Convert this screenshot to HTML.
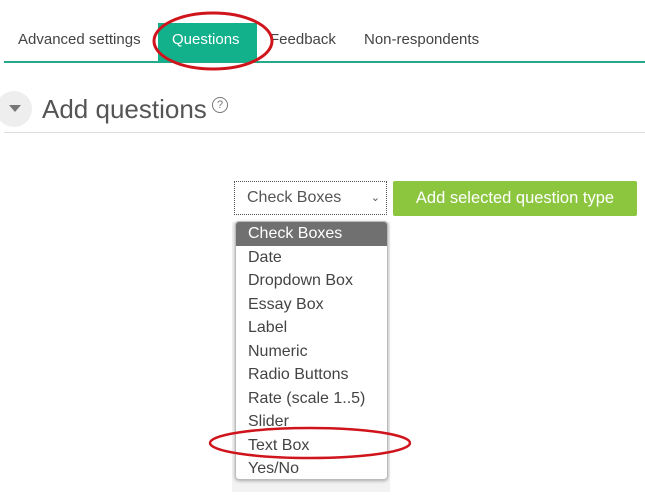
<!DOCTYPE html>
<html><head><style>
body{margin:0;width:645px;height:501px;background:#fff;font-family:"Liberation Sans",sans-serif;position:relative;overflow:hidden;color:#333}
.a{position:absolute}
.tab{position:absolute;top:31px;font-size:15px;color:#444}
.it{height:23.5px;line-height:23.5px;padding-left:12px;font-size:16px;color:#444}
</style></head><body>
<div class="a" style="left:4px;top:61px;width:641px;height:2px;background:#26a98b"></div>
<div class="a" style="left:158px;top:23px;width:99px;height:39px;background:#13b08c"></div>
<div class="tab" style="left:18px">Advanced settings</div>
<div class="tab" style="left:172px;color:#fff">Questions</div>
<div class="tab" style="left:270px">Feedback</div>
<div class="tab" style="left:364px">Non-respondents</div>
<div class="a" style="left:-4px;top:91px;width:36px;height:36px;border-radius:50%;background:#eee"></div>
<div class="a" style="left:9px;top:105px;width:0;height:0;border-left:6px solid transparent;border-right:6px solid transparent;border-top:7px solid #777"></div>
<div class="a" style="left:42px;top:94px;font-size:26px;color:#555">Add questions</div>
<div class="a" style="left:212px;top:97px;width:14px;height:14px;border:1.5px solid #777;border-radius:50%;font-size:11px;line-height:14px;text-align:center;color:#777">?</div>
<div class="a" style="left:4px;top:132px;width:641px;height:1px;background:#ddd"></div>
<div class="a" style="left:234px;top:181px;width:151px;height:32px;border:1px dotted #555;font-size:16px;line-height:32px;color:#555"><span style="padding-left:12px">Check Boxes</span><span style="position:absolute;right:6px;font-size:11px">&#x2304;</span></div>
<div class="a" style="left:393px;top:181px;width:244px;height:35px;background:#8cc63f;border-radius:2px;color:#fff;font-size:16.5px;line-height:35px;text-align:center">Add selected question type</div>
<div class="a" style="left:232px;top:222px;width:158px;height:270px;background:#f2f2f2"></div>
<div class="a" style="left:235px;top:221px;width:151px;height:257px;background:#fff;border:1px solid #bbb;border-radius:4px;box-shadow:0 1px 3px rgba(0,0,0,.3);overflow:hidden">
<div class="it" style="background:#707070;color:#fff">Check Boxes</div>
<div class="it">Date</div><div class="it">Dropdown Box</div><div class="it">Essay Box</div><div class="it">Label</div><div class="it">Numeric</div><div class="it">Radio Buttons</div><div class="it">Rate (scale 1..5)</div><div class="it">Slider</div><div class="it">Text Box</div><div class="it">Yes/No</div>
</div>
<svg class="a" style="left:0;top:0" width="645" height="501">
<ellipse cx="213" cy="41" rx="59" ry="28" fill="none" stroke="#d0141c" stroke-width="3"/>
<ellipse cx="310" cy="443" rx="100" ry="15" fill="none" stroke="#d0141c" stroke-width="2.5"/>
</svg>
</body></html>
